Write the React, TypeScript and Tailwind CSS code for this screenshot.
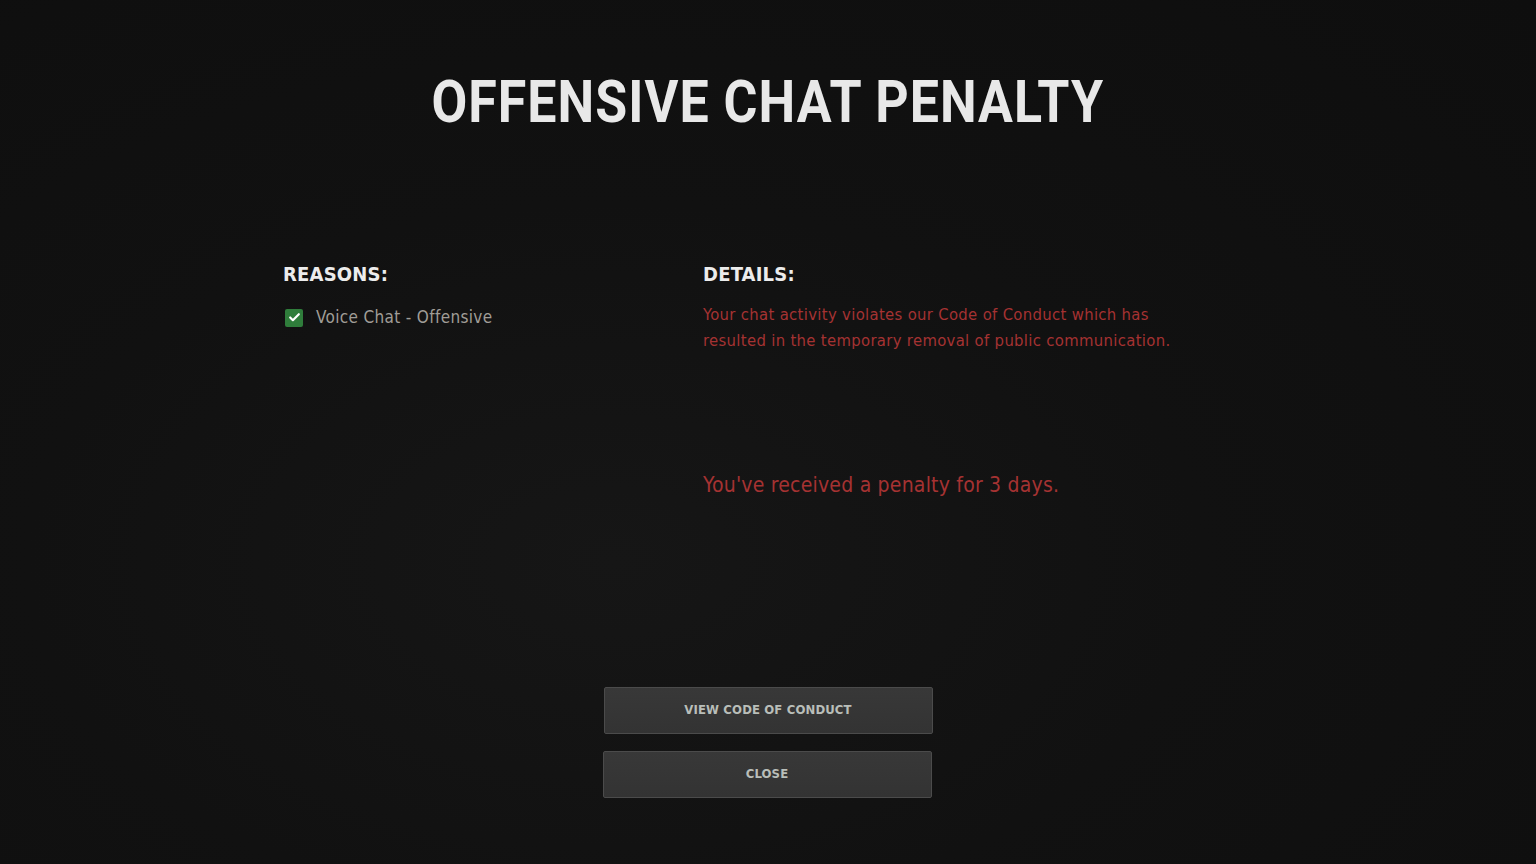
import { Check } from "lucide-react";

const font = { fontFamily: '"DejaVu Sans Condensed", "DejaVu Sans", sans-serif' };
const titleFont = { fontFamily: 'Roboto, "DejaVu Sans", sans-serif' };

function Reasons() {
  return (
    <div>
      <h2 className="text-[20px] font-bold tracking-[0.01em] text-[#ececec] leading-none">REASONS:</h2>
      <div className="mt-[21px] ml-[2px] flex items-center gap-[13px]">
        <span className="flex h-[18px] w-[18px] items-center justify-center rounded-[2px] bg-[#2f7d3b]">
          <Check className="h-[13px] w-[13px] text-white" strokeWidth={4} />
        </span>
        <span className="text-[17px] tracking-[0.02em] text-[#a09d97]">Voice Chat - Offensive</span>
      </div>
    </div>
  );
}

function Details() {
  return (
    <div>
      <h2 className="text-[20px] font-bold tracking-[0.01em] text-[#ececec] leading-none">DETAILS:</h2>
      <p className="mt-[18px] text-[16.5px] leading-[26px] tracking-[0.02em] text-[#a53232]">
        Your chat activity violates our Code of Conduct which has
        <br />
        resulted in the temporary removal of public communication.
      </p>
      <p className="mt-[116px] text-[21px] tracking-[0.01em] text-[#a53232]">
        You've received a penalty for 3 days.
      </p>
    </div>
  );
}

export default function App() {
  return (
    <div
      className="flex h-[864px] w-full flex-col items-center bg-[#0f0f0f] bg-[radial-gradient(ellipse_at_40%_65%,#161616_0%,#111111_45%,#0e0e0e_100%)]"
      style={font}
    >
      <h1
        className="mt-[72px] scale-x-[0.865] text-[60px] font-bold leading-none tracking-[0.02em] text-[#e8e8e8]"
        style={titleFont}
      >
        OFFENSIVE CHAT PENALTY
      </h1>
      <div className="mt-[132px] grid w-[970px] grid-cols-[420px_1fr]">
        <Reasons />
        <Details />
      </div>
      <div className="mt-[185px] flex flex-col items-center gap-[17px]">
        <button className="h-[47px] w-[329px] rounded-[2px] border border-[#4b4b4b] bg-gradient-to-b from-[#383838] to-[#333333] text-[13px] font-bold tracking-[0.01em] text-[#b9beb9]">
          VIEW CODE OF CONDUCT
        </button>
        <button className="-ml-[2px] h-[47px] w-[329px] rounded-[2px] border border-[#4b4b4b] bg-gradient-to-b from-[#383838] to-[#333333] text-[13px] font-bold tracking-[0.01em] text-[#b9beb9]">
          CLOSE
        </button>
      </div>
    </div>
  );
}
